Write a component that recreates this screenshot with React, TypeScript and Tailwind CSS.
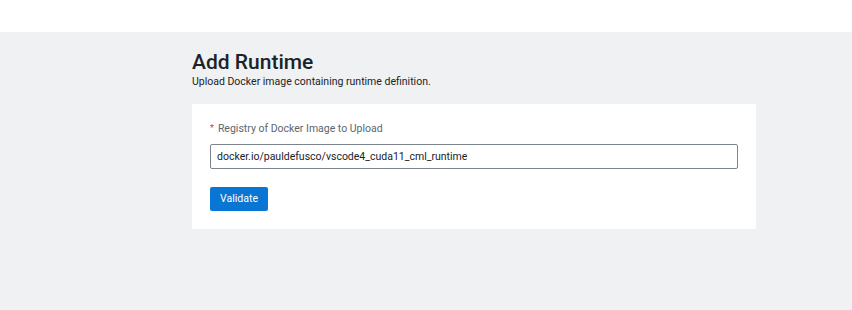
export default function App() {
  return (
    <div className="flex h-[310px] w-[852px] flex-col bg-white font-['Roboto',sans-serif]">
      {/* top bar */}
      <div className="h-8 bg-white" />

      <main className="flex-1 bg-[#f0f1f3] pl-[192px]">
        <div className="w-[564px] pt-[17px]">
          <h1 className="text-[21px] font-medium leading-[26px] text-[#1b2329]">Add Runtime</h1>
          <p className="text-[10.5px] leading-[14px] text-[#1b2329]">
            Upload Docker image containing runtime definition.
          </p>

          <section className="mt-[15px] bg-white px-[18px] pb-[18px] pt-[18px]">
            <label className="flex items-start gap-[4px] text-[10.5px] leading-[14px] text-[#5c666f]">
              <span className="text-[9px] leading-[12px] text-[#d9363e]">*</span>
              Registry of Docker Image to Upload
            </label>
            <input
              type="text"
              defaultValue="docker.io/pauldefusco/vscode4_cuda11_cml_runtime"
              className="mt-[8px] h-[25px] w-[528px] rounded-[2px] border border-[#7c858d] px-[6px] text-[10.5px] text-[#1b2329] outline-none"
            />
            <button className="mt-[18px] block h-6 w-[58px] rounded-[2px] bg-[#0a76d4] text-[10.5px] text-white">
              Validate
            </button>
          </section>
        </div>
      </main>
    </div>
  );
}
